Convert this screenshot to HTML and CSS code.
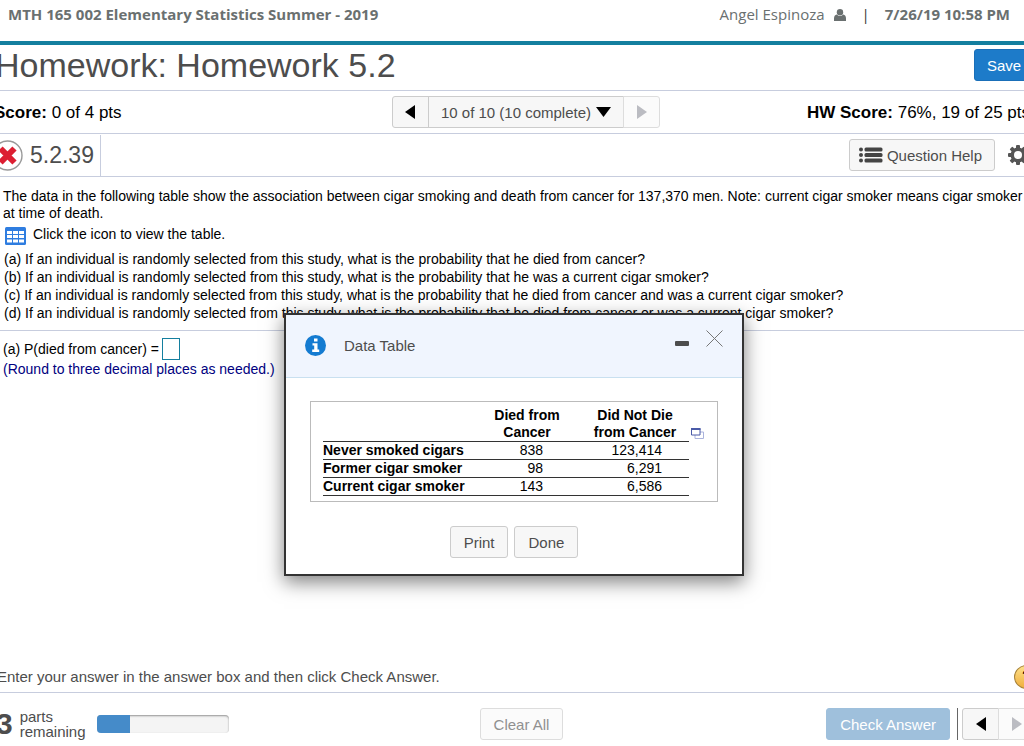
FILE: index.html
```
<!DOCTYPE html>
<html lang="en">
<head>
    <meta charset="UTF-8">
    <meta name="viewport" content="width=device-width, initial-scale=1.0">
    <title>Homework 5.2</title>
    <link rel="stylesheet" href="styles.css">
</head>
<body>
    <header class="topbar">
        <span class="course">MTH 165 002 Elementary Statistics Summer - 2019</span>
        <div class="user">
            <span>Angel Espinoza</span>
            <svg class="user-icon" width="12" height="12" viewBox="0 0 12 12" aria-hidden="true">
                <circle cx="6" cy="3.200" r="3.200"/>
                <path d="M0 12V9.500Q0 6 2.800 5.500Q6 8.500 9.200 5.500Q12 6 12 9.500V12Z"/>
            </svg>
            <span class="divider">|</span>
            <span class="date">7/26/19 10:58 PM</span>
        </div>
    </header>

    <div class="page">
        <div class="title-row">
            <h1>Homework: Homework 5.2</h1>
            <button class="btn btn-save" type="button">Save</button>
        </div>

        <div class="score-row">
            <div class="score"><b>Score:</b> 0 of 4 pts</div>
            <div class="btn-group">
                <button class="btn btn-arrow" type="button" aria-label="Previous question">
                    <svg width="10" height="14" viewBox="0 0 10 14"><path d="M10 0V14L0 7Z"/></svg>
                </button>
                <button class="btn btn-list" type="button">10 of 10 (10 complete)
                    <svg width="15" height="10" viewBox="0 0 15 10"><path d="M0 0H15L7.500 10Z"/></svg>
                </button>
                <button class="btn btn-arrow" type="button" aria-label="Next question" disabled>
                    <svg width="10" height="14" viewBox="0 0 10 14"><path d="M0 0V14L10 7Z"/></svg>
                </button>
            </div>
            <div class="score hw-score"><b>HW Score:</b> 76%, 19 of 25 pts</div>
        </div>

        <div class="question-row">
            <div class="question-id">
                <svg width="31" height="31" viewBox="0 0 31 31" aria-hidden="true">
                    <circle cx="15.500" cy="15.500" r="14.500" fill="#fff" stroke="#999" stroke-width="1.400"/>
                    <path d="M8.500 8.500L22.500 22.500M22.500 8.500L8.500 22.500" stroke="#dc1f32" stroke-width="6"/>
                </svg>
                <span>5.2.39</span>
            </div>
            <div class="tools">
                <button class="btn btn-help" type="button">
                    <svg width="24" height="16" viewBox="0 0 24 16" fill="#444" aria-hidden="true">
                        <circle cx="2" cy="2.500" r="2"/><circle cx="2" cy="8" r="2"/><circle cx="2" cy="13.500" r="2"/>
                        <rect x="5.500" y="0.500" width="18" height="4" rx="1.500"/>
                        <rect x="5.500" y="6" width="18" height="4" rx="1.500"/>
                        <rect x="5.500" y="11.500" width="18" height="4" rx="1.500"/>
                    </svg>
                    Question Help
                </button>
                <button class="btn-gear" type="button" aria-label="Settings">
                    <svg width="20" height="20" viewBox="0 0 20 20">
                        <g fill="#555">
                            <rect x="8" y="0" width="4" height="20" rx="1"/>
                            <rect x="8" y="0" width="4" height="20" rx="1" transform="rotate(45 10 10)"/>
                            <rect x="8" y="0" width="4" height="20" rx="1" transform="rotate(90 10 10)"/>
                            <rect x="8" y="0" width="4" height="20" rx="1" transform="rotate(135 10 10)"/>
                            <circle cx="10" cy="10" r="7.500"/>
                        </g>
                        <circle cx="10" cy="10" r="4" fill="#fff"/>
                    </svg>
                </button>
            </div>
        </div>

        <main>
            <section class="problem">
                <p>The data in the following table show the association between cigar smoking and death from cancer for 137,370 men. Note: current cigar smoker means cigar smoker at time of death.</p>
                <a class="view-table" href="#dataTable">
                    <svg width="21" height="18" viewBox="0 0 21 18" aria-hidden="true">
                        <rect width="21" height="18" rx="1.500" fill="#2f7de0"/>
                        <path d="M2 4h5v3H2zM8 4h5v3H8zM14 4h5v3h-5zM2 8h5v3H2zM8 8h5v3H8zM14 8h5v3h-5zM2 12.500h5v3H2zM8 12.500h5v3H8zM14 12.500h5v3h-5z" fill="#fff"/>
                    </svg>
                    <span>Click the icon to view the table.</span>
                </a>
                <ul class="parts">
                    <li>(a) If an individual is randomly selected from this study, what is the probability that he died from cancer?</li>
                    <li>(b) If an individual is randomly selected from this study, what is the probability that he was a current cigar smoker?</li>
                    <li>(c) If an individual is randomly selected from this study, what is the probability that he died from cancer and was a current cigar smoker?</li>
                    <li>(d) If an individual is randomly selected from this study, what is the probability that he died from cancer or was a current cigar smoker?</li>
                </ul>
            </section>

            <section class="answer">
                <div class="answer-line">
                    <label for="answerA">(a) P(died from cancer) =</label>
                    <input type="text" id="answerA" name="answerA">
                </div>
                <p class="hint">(Round to three decimal places as needed.)</p>
            </section>
        </main>

        <div class="instruction">
            <span>Enter your answer in the answer box and then click Check Answer.</span>
            <button class="btn-question" type="button" aria-label="Help">?</button>
        </div>

        <footer class="footer">
            <div class="remaining">
                <span class="count">3</span>
                <span class="count-label">parts<br>remaining</span>
                <div class="progress"><div class="progress-bar" style="width: 25%"></div></div>
            </div>
            <button class="btn btn-clear" type="button" disabled>Clear All</button>
            <div class="actions">
                <button class="btn btn-check" type="button">Check Answer</button>
                <div class="btn-group">
                    <button class="btn btn-arrow" type="button" aria-label="Previous part">
                        <svg width="10" height="14" viewBox="0 0 10 14"><path d="M10 0V14L0 7Z"/></svg>
                    </button>
                    <button class="btn btn-arrow" type="button" aria-label="Next part" disabled>
                        <svg width="10" height="14" viewBox="0 0 10 14"><path d="M0 0V14L10 7Z"/></svg>
                    </button>
                </div>
            </div>
        </footer>
    </div>

    <!-- Data table dialog -->
    <div class="dialog" id="dataTable" role="dialog" aria-labelledby="dialogTitle">
        <div class="dialog-header">
            <svg width="21" height="21" viewBox="0 0 21 21" aria-hidden="true">
                <circle cx="10.500" cy="10.500" r="10.500" fill="#147bd1"/>
                <path d="M9 3.500h3.500v3H9zM7.500 8.200h5v6.300h1.700V17H7.200v-2.500h2v-4H7.500z" fill="#fff"/>
            </svg>
            <h2 id="dialogTitle">Data Table</h2>
            <button class="btn-minimize" type="button" aria-label="Minimize">
                <svg width="14" height="5" viewBox="0 0 14 5"><rect width="14" height="5" rx="1" fill="#4d4d4d"/></svg>
            </button>
            <button class="btn-close" type="button" aria-label="Close">
                <svg width="17" height="17" viewBox="0 0 17 17"><path d="M0.500 0.500L16.500 16.500M16.500 0.500L0.500 16.500" stroke="#777"/></svg>
            </button>
        </div>
        <div class="dialog-body">
            <div class="table-box">
                <table>
                    <thead>
                        <tr>
                            <td></td>
                            <th>Died from<br>Cancer</th>
                            <th>Did Not Die<br>from Cancer</th>
                        </tr>
                    </thead>
                    <tbody>
                        <tr><th>Never smoked cigars</th><td>838</td><td>123,414</td></tr>
                        <tr><th>Former cigar smoker</th><td>98</td><td>6,291</td></tr>
                        <tr><th>Current cigar smoker</th><td>143</td><td>6,586</td></tr>
                    </tbody>
                </table>
                <button class="btn-copy" type="button" aria-label="Copy table">
                    <svg width="13" height="11" viewBox="0 0 13 11">
                        <path d="M4 4h8.500v6.500H4z" fill="#fff" stroke="#aab3dc"/>
                        <path d="M0.500 0.500h8.500v6.500H0.500z" fill="#fff" stroke="#4a5ba8"/>
                        <path d="M0 0h9.500v2H0z" fill="#4a5ba8"/>
                    </svg>
                </button>
            </div>
            <div class="dialog-buttons">
                <button class="btn" type="button">Print</button>
                <button class="btn" type="button">Done</button>
            </div>
        </div>
    </div>
</body>
</html>
```
FILE: styles.css
```
* {
    box-sizing: border-box;
}
body {
    margin: 0;
    position: relative;
    min-height: 100vh;
    display: flex;
    flex-direction: column;
    overflow: hidden;
    background-color: #fff;
    color: #000;
    font-family: "Liberation Sans", Arial, sans-serif;
    font-size: 14px;
}
h1, h2, p, ul {
    margin: 0;
    padding: 0;
    font-weight: normal;
}
button {
    font-family: inherit;
    cursor: pointer;
}
svg {
    flex: none;
}

/* Course bar */
.topbar {
    display: flex;
    justify-content: space-between;
    height: 45px;
    padding: 3px 14px 0 8px;
    border-bottom: 4px solid #147f9f;
    color: #6a7070;
    font-family: "Open Sans", sans-serif;
    font-size: 15px;
    line-height: 22px;
}
.course, .date {
    font-weight: bold;
}
.user {
    display: flex;
}
.user-icon {
    margin: 6px 16px 0 9px;
    fill: #6a7070;
}
.divider {
    margin-right: 15px;
    color: #333;
}

/* The page is a little wider than the window on both sides */
.page {
    flex: 1;
    display: flex;
    flex-direction: column;
    margin: 0 -36px 0 -8px;
}
.title-row, .score-row, .question-row {
    display: flex;
    justify-content: space-between;
    border-bottom: 1px solid #c7cdde;
}
.title-row {
    height: 46px;
    padding: 4px 0 0 3px;
}
.title-row h1 {
    color: #4d4d4d;
    font-size: 34px;
    line-height: 32px;
}
.btn {
    display: flex;
    align-items: center;
    justify-content: center;
    height: 32px;
    padding: 0 13px;
    border: 1px solid #ccc;
    border-radius: 3px;
    background-color: #f7f7f7;
    color: #4d4d4d;
    font-size: 15px;
}
.btn:hover {
    background-color: #eee;
}
.btn-save {
    width: 86px;
    padding: 0 12px;
    justify-content: flex-start;
    border-color: #1a6fb8;
    background-color: #1d7bc9;
    color: #fff;
}
.score-row {
    display: grid;
    grid-template-columns: 1fr auto 1fr;
    align-items: center;
    height: 43px;
}
.score {
    padding: 2px 0 0 2px;
    font-size: 17px;
}
.hw-score {
    padding-right: 30px;
    text-align: right;
}
.btn-group {
    display: flex;
}
.btn-group .btn {
    border-radius: 0;
}
.btn-group .btn + .btn {
    margin-left: -1px;
}
.btn-group .btn:first-child {
    border-radius: 3px 0 0 3px;
}
.btn-group .btn:last-child {
    border-radius: 0 3px 3px 0;
}
.btn-arrow {
    width: 37px;
}
.btn-arrow:disabled {
    border-color: #ddd;
    background-color: #fbfbfb;
    fill: #bbbcc2;
}
.btn-list {
    gap: 5px;
    padding: 0 12px;
}
.question-row {
    height: 43px;
}
.question-id {
    display: flex;
    align-items: center;
    gap: 7px;
    margin-top: 1px;
    padding-right: 6px;
    border-right: 1px solid #c7cdde;
    color: #4d4d4d;
    font-size: 23px;
}
.tools {
    display: flex;
    align-items: center;
    gap: 13px;
    padding-right: 32px;
}
.btn-help {
    gap: 4px;
    padding: 0 12px 0 9px;
}
.btn-gear, .btn-minimize, .btn-close, .btn-copy {
    display: flex;
    padding: 0;
    border: none;
    background: none;
}

/* Problem */
main {
    flex: 1;
}
.problem {
    padding: 11px 36px 8px 11px;
    border-bottom: 1px solid #c7cdde;
    line-height: 17px;
}
.view-table {
    display: flex;
    align-items: center;
    gap: 7px;
    height: 28px;
    padding-left: 2px;
    color: #000;
    text-decoration: none;
}
.view-table span {
    padding-bottom: 3px;
}
.parts {
    list-style: none;
    padding-left: 1px;
    line-height: 18px;
}
.answer {
    padding: 7px 11px;
}
.answer-line {
    display: flex;
    align-items: center;
    gap: 3px;
}
.answer-line input {
    width: 18px;
    height: 22px;
    padding: 0;
    border: 1px solid #147f9f;
}
.hint {
    color: #000080;
    line-height: 18px;
}

/* Bottom bar */
.instruction {
    display: flex;
    justify-content: space-between;
    align-items: center;
    height: 32px;
    padding: 0 20px 0 5px;
    border-bottom: 1px solid #c7cdde;
    color: #4d4d4d;
    font-size: 15px;
}
.btn-question {
    width: 26px;
    height: 24px;
    padding: 0;
    border: 1px solid #a8843c;
    border-radius: 50%;
    background: linear-gradient(#fde08a, #f0ae3c);
    font-size: 16px;
    font-weight: bold;
}
.footer {
    display: grid;
    grid-template-columns: 1fr auto 1fr;
    align-items: center;
    height: 53px;
    padding: 9px 25px 0 4px;
    color: #4d4d4d;
}
.remaining {
    display: flex;
    align-items: center;
}
.count {
    font-size: 30px;
    font-weight: bold;
}
.count-label {
    margin: 0 11px 0 7px;
    font-size: 15px;
    line-height: 15px;
}
.progress {
    width: 132px;
    height: 18px;
    overflow: hidden;
    border-radius: 4px;
    background-color: #f4f4f4;
    box-shadow: inset 0 1px 2px rgba(0,0,0,0.4);
}
.progress-bar {
    height: 100%;
    background-color: #458bc9;
}
.btn-clear {
    margin-left: 12px;
    border-color: #ddd;
    background-color: #fbfbfb;
    color: #909090;
}
.actions {
    display: flex;
    justify-content: flex-end;
}
.btn-check {
    border-color: #9fc0dc;
    background-color: #9fc0dc;
    color: #fff;
}
.actions .btn-group {
    margin-left: 7px;
    padding-left: 4px;
    border-left: 1px solid #666;
}

/* Dialog */
.dialog {
    position: absolute;
    top: 313px;
    left: 284px;
    width: 460px;
    border: 2px solid #333;
    background-color: #fff;
    box-shadow: 0 6px 18px rgba(0,0,0,0.5);
}
.dialog-header {
    display: flex;
    align-items: center;
    height: 63px;
    padding: 0 19px 1px;
    border-bottom: 1px solid #c9e0f0;
    background-color: #f0f5fe;
}
.dialog-header h2 {
    flex: 1;
    margin-left: 18px;
    color: #4d4d4d;
    font-size: 15px;
}
.btn-minimize {
    margin: 0 17px 4px 0;
}
.btn-close {
    margin-bottom: 14px;
}
.dialog-body {
    padding: 23px 24px 16px;
}
.table-box {
    display: flex;
    align-items: flex-start;
    gap: 2px;
    padding: 5px 14px 5px 12px;
    border: 1px solid #bbb;
}
table {
    flex: none;
    width: 366px;
    border-collapse: collapse;
    line-height: 17px;
}
tr {
    border-bottom: 1px solid #333;
}
th, td {
    padding: 0;
}
thead th {
    width: 108px;
}
tbody th {
    text-align: left;
}
tbody td {
    padding-right: 38px;
    text-align: right;
}
tbody td:last-child {
    padding-right: 27px;
}
.btn-copy {
    margin-top: 21px;
}
.dialog-buttons {
    display: flex;
    justify-content: center;
    gap: 6px;
    margin-top: 24px;
}
```
